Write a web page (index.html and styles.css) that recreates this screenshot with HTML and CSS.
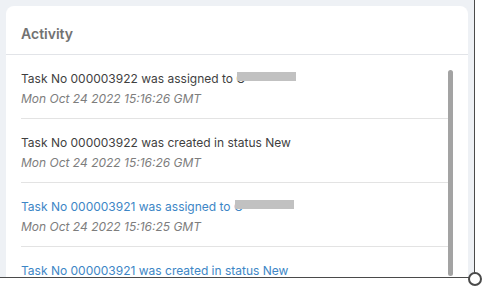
FILE: index.html
```html
<!DOCTYPE html>
<html>
<head>
<meta charset="utf-8">
<link rel="stylesheet" href="styles.css">
</head>
<body>
<div class="frame">
  <div class="page">
    <section class="card">
      <header class="card-head">Activity</header>
      <div class="list-wrap">
        <ul class="list">
          <li class="item">
            <div class="msg">Task No 000003922 was assigned to <span class="redact-wrap"><span class="cut">C</span><span class="redact"></span></span></div>
            <div class="date">Mon Oct 24 2022 15:16:26 GMT</div>
          </li>
          <li class="item">
            <div class="msg">Task No 000003922 was created in status New</div>
            <div class="date">Mon Oct 24 2022 15:16:26 GMT</div>
          </li>
          <li class="item link">
            <div class="msg">Task No 000003921 was assigned to <span class="redact-wrap"><span class="cut">C</span><span class="redact"></span></span></div>
            <div class="date">Mon Oct 24 2022 15:16:25 GMT</div>
          </li>
          <li class="item link">
            <div class="msg">Task No 000003921 was created in status New</div>
            <div class="date">Mon Oct 24 2022 15:16:25 GMT</div>
          </li>
        </ul>
        <div class="thumb"></div>
      </div>
    </section>
  </div>
  <div class="handle"></div>
</div>
</body>
</html>
```

FILE: styles.css
```css
html, body {
  margin: 0;
  padding: 0;
  background: #ffffff;
}
body {
  font-family: Inter, "Noto Sans", sans-serif;
  width: 482px;
  height: 290px;
  overflow: hidden;
}
.frame {
  position: relative;
  width: 475px;
  height: 278px;
}
.page {
  width: 475px;
  height: 278px;
  box-sizing: border-box;
  background: #eef1f5;
  border-right: 1.5px solid #4a4a4a;
  border-bottom: 1.5px solid #4a4a4a;
  padding: 6px 6px 0 6px;
  overflow: hidden;
}
.card {
  background: #ffffff;
  border-radius: 8px 8px 0 0;
  height: 320px;
  display: flex;
  flex-direction: column;
}
.card-head {
  height: 49px;
  box-sizing: border-box;
  padding: 19px 15px 0 15px;
  font-size: 14px;
  line-height: 17px;
  font-weight: 600;
  color: #727272;
  border-bottom: 1px solid #e2e4e8;
}
.list-wrap {
  position: relative;
  flex: 1;
  padding: 0 20px 0 15px;
}
.list {
  list-style: none;
  margin: 0;
  padding: 0;
}
.item {
  height: 64px;
  box-sizing: border-box;
  padding-top: 16px;
  border-bottom: 1px solid #e3e3e3;
  display: flex;
  flex-direction: column;
  gap: 4px;
}
.msg {
  font-size: 12px;
  line-height: 16px;
  color: #3f3f3f;
  white-space: nowrap;
}
.link .msg {
  color: #3d86c6;
}
.date {
  font-size: 12px;
  line-height: 16px;
  font-style: italic;
  color: #7d7d7d;
}
.redact-wrap {
  position: relative;
}
.redact {
  position: absolute;
  left: 1px;
  top: 1px;
  width: 59px;
  height: 9px;
  background: #c1c1c1;
}
.thumb {
  position: absolute;
  left: 442px;
  top: 15px;
  width: 5px;
  height: 206px;
  border-radius: 3px;
  background: #a3a3a3;
}
.handle {
  position: absolute;
  left: 468px;
  top: 272px;
  width: 10px;
  height: 10px;
  border: 2px solid #4a4a4a;
  border-radius: 50%;
  background: #ffffff;
}
```
